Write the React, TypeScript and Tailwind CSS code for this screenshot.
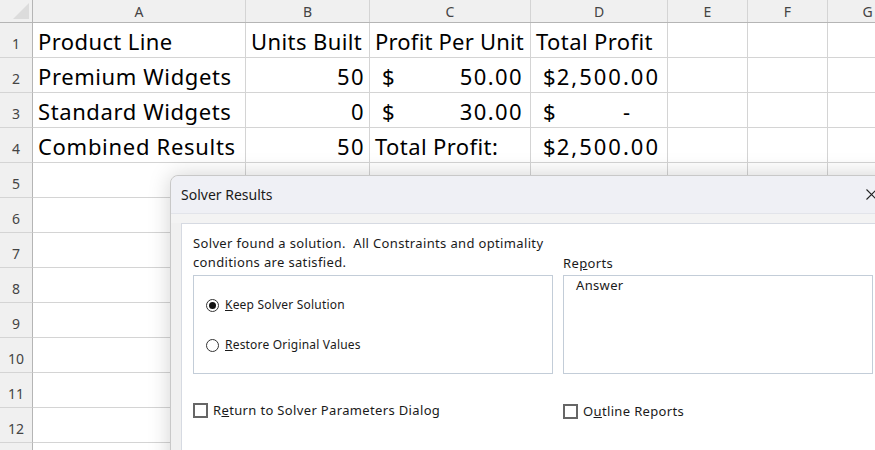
import React from "react";

const cols = [
  { l: "A", w: 213 },
  { l: "B", w: 124 },
  { l: "C", w: 161 },
  { l: "D", w: 137 },
  { l: "E", w: 80 },
  { l: "F", w: 80 },
  { l: "G", w: 80 },
];

type Cell = React.ReactNode;

const dollar = (v: string) => (
  <div className="flex w-full justify-between pl-[12px] pr-[7px]">
    <span>$</span>
    <span className="tracking-[1.4px]">{v}</span>
  </div>
);

const total = (v: string) => (
  <div className="flex w-full justify-between pl-[12px] pr-[7px]">
    <span>$</span>
    <span className="tracking-[2px]">{v}</span>
  </div>
);

const rows: Cell[][] = [
  [
    <span className="pl-[5px] tracking-[0.4px]">Product Line</span>,
    <span className="pl-[5px] tracking-[0.4px]">Units Built</span>,
    <span className="pl-[5px] tracking-[0.2px]">Profit Per Unit</span>,
    <span className="pl-[5px] tracking-[0.4px]">Total Profit</span>,
  ],
  [
    <span className="pl-[5px] tracking-[0.6px]">Premium Widgets</span>,
    <span className="ml-auto pr-[4px] tracking-[1.4px]">50</span>,
    dollar("50.00"),
    total("2,500.00"),
  ],
  [
    <span className="pl-[5px] tracking-[0.6px]">Standard Widgets</span>,
    <span className="ml-auto pr-[4px] tracking-[1.4px]">0</span>,
    dollar("30.00"),
    <div className="flex w-full justify-between pl-[12px] pr-[37px]">
      <span>$</span>
      <span>-</span>
    </div>,
  ],
  [
    <span className="pl-[5px] tracking-[0.7px]">Combined Results</span>,
    <span className="ml-auto pr-[4px] tracking-[1.4px]">50</span>,
    <span className="pl-[5px] tracking-[0.4px]">Total Profit:</span>,
    total("2,500.00"),
  ],
];

function Radio({ checked }: { checked?: boolean }) {
  return (
    <span className="flex h-[13px] w-[13px] items-center justify-center rounded-full border border-[#333] bg-white">
      {checked && <span className="h-[7px] w-[7px] rounded-full bg-[#111]" />}
    </span>
  );
}

function Check() {
  return <span className="block h-[15px] w-[15px] border-2 border-[#666] bg-white" />;
}

export default function App() {
  const ui = { fontFamily: '"Noto Sans", "Open Sans", sans-serif' };
  return (
    <div
      className="relative h-[450px] w-[875px] overflow-hidden bg-white"
      style={{ fontFamily: '"Noto Sans", Inter, sans-serif' }}
    >
      {/* column header */}
      <div className="flex h-[23px] border-b border-[#b5b5b5] bg-[#f0f0f0]">
        <div className="relative w-[33px] shrink-0 border-r border-[#b5b5b5]">
          <svg className="absolute bottom-[3px] right-[3px]" width="16" height="16" viewBox="0 0 16 16">
            <polygon points="16,0 16,16 0,16" fill="#dcdcdc" />
          </svg>
        </div>
        {cols.map((c) => (
          <div
            key={c.l}
            className="flex shrink-0 items-center justify-center border-r border-[#d4d4d4] text-[14px] text-[#444]"
            style={{ width: c.w }}
          >
            {c.l}
          </div>
        ))}
      </div>
      {/* rows */}
      {Array.from({ length: 13 }).map((_, r) => (
        <div key={r} className="flex h-[35px]">
          <div className="flex w-[33px] shrink-0 items-center justify-center border-b border-r border-[#d4d4d4] border-r-[#b5b5b5] bg-[#f0f0f0] pt-[7px] text-[14px] text-[#444]">
            {r < 12 ? r + 1 : ""}
          </div>
          {cols.map((c, ci) => (
            <div
              key={c.l}
              className="flex shrink-0 items-end whitespace-nowrap border-b border-r border-[#d4d4d4] pb-[1px] text-[22px] leading-[30px] text-black"
              style={{ width: c.w }}
            >
              {rows[r] && rows[r][ci]}
            </div>
          ))}
        </div>
      ))}

      {/* dialog */}
      <div
        className="absolute left-[170px] top-[175px] h-[300px] w-[730px] rounded-tl-[8px] border border-[#c8c8c8] bg-[#f0f0f0] shadow-[0_0_22px_rgba(0,0,0,0.18)]"
        style={ui}
      >
        <div className="flex h-[37px] items-center justify-between rounded-tl-[8px] bg-[#eff0f5] pl-[10px] pr-[10px]">
          <span className="text-[14px] text-[#1a1a1a]">Solver Results</span>
          <svg width="11" height="11" viewBox="0 0 11 11" className="mr-[12px]">
            <path d="M0.5 0.5 L10.5 10.5 M10.5 0.5 L0.5 10.5" stroke="#222" strokeWidth="1.1" />
          </svg>
        </div>
        <div className="h-[10px] border-t border-[#e2e4ea] bg-[#f3f3f3]" />
        <div className="ml-[10px] h-[260px] border-l border-t border-[#d6dae2] bg-white pl-[11px] pt-[10px] text-[13px] tracking-[0.35px] text-[#1a1a1a]">
          <div className="flex items-end gap-[10px]">
            <div className="w-[360px]">
              <div className="leading-[19px]">
                Solver found a solution.&nbsp; All Constraints and optimality
                <br />
                conditions are satisfied.
              </div>
              <div className="mt-[3px] flex h-[99px] flex-col gap-[22px] border border-[#c3cdd8] pl-[12px] pt-[20px]">
                <div className="flex items-center gap-[6px]">
                  <Radio checked />
                  <span className="text-[12px] tracking-[0.2px]">
                    <u>K</u>eep Solver Solution
                  </span>
                </div>
                <div className="flex items-center gap-[6px]">
                  <Radio />
                  <span className="text-[12px] tracking-[0.2px]">
                    <u>R</u>estore Original Values
                  </span>
                </div>
              </div>
            </div>
            <div className="w-[310px]">
              <div className="mb-[2px] leading-[19px]">
                Re<u>p</u>orts
              </div>
              <div className="h-[99px] border border-[#c3cdd8] pl-[12px] pt-0">Answer</div>
            </div>
          </div>
          <div className="flex">
            <div className="mt-[25px] flex w-[370px] items-center gap-[5px] pl-0">
              <Check />
              <span>
                R<u>e</u>turn to Solver Parameters Dialog
              </span>
            </div>
            <div className="mt-[28px] flex items-center gap-[5px]">
              <Check />
              <span>
                O<u>u</u>tline Reports
              </span>
            </div>
          </div>
        </div>
      </div>
    </div>
  );
}
